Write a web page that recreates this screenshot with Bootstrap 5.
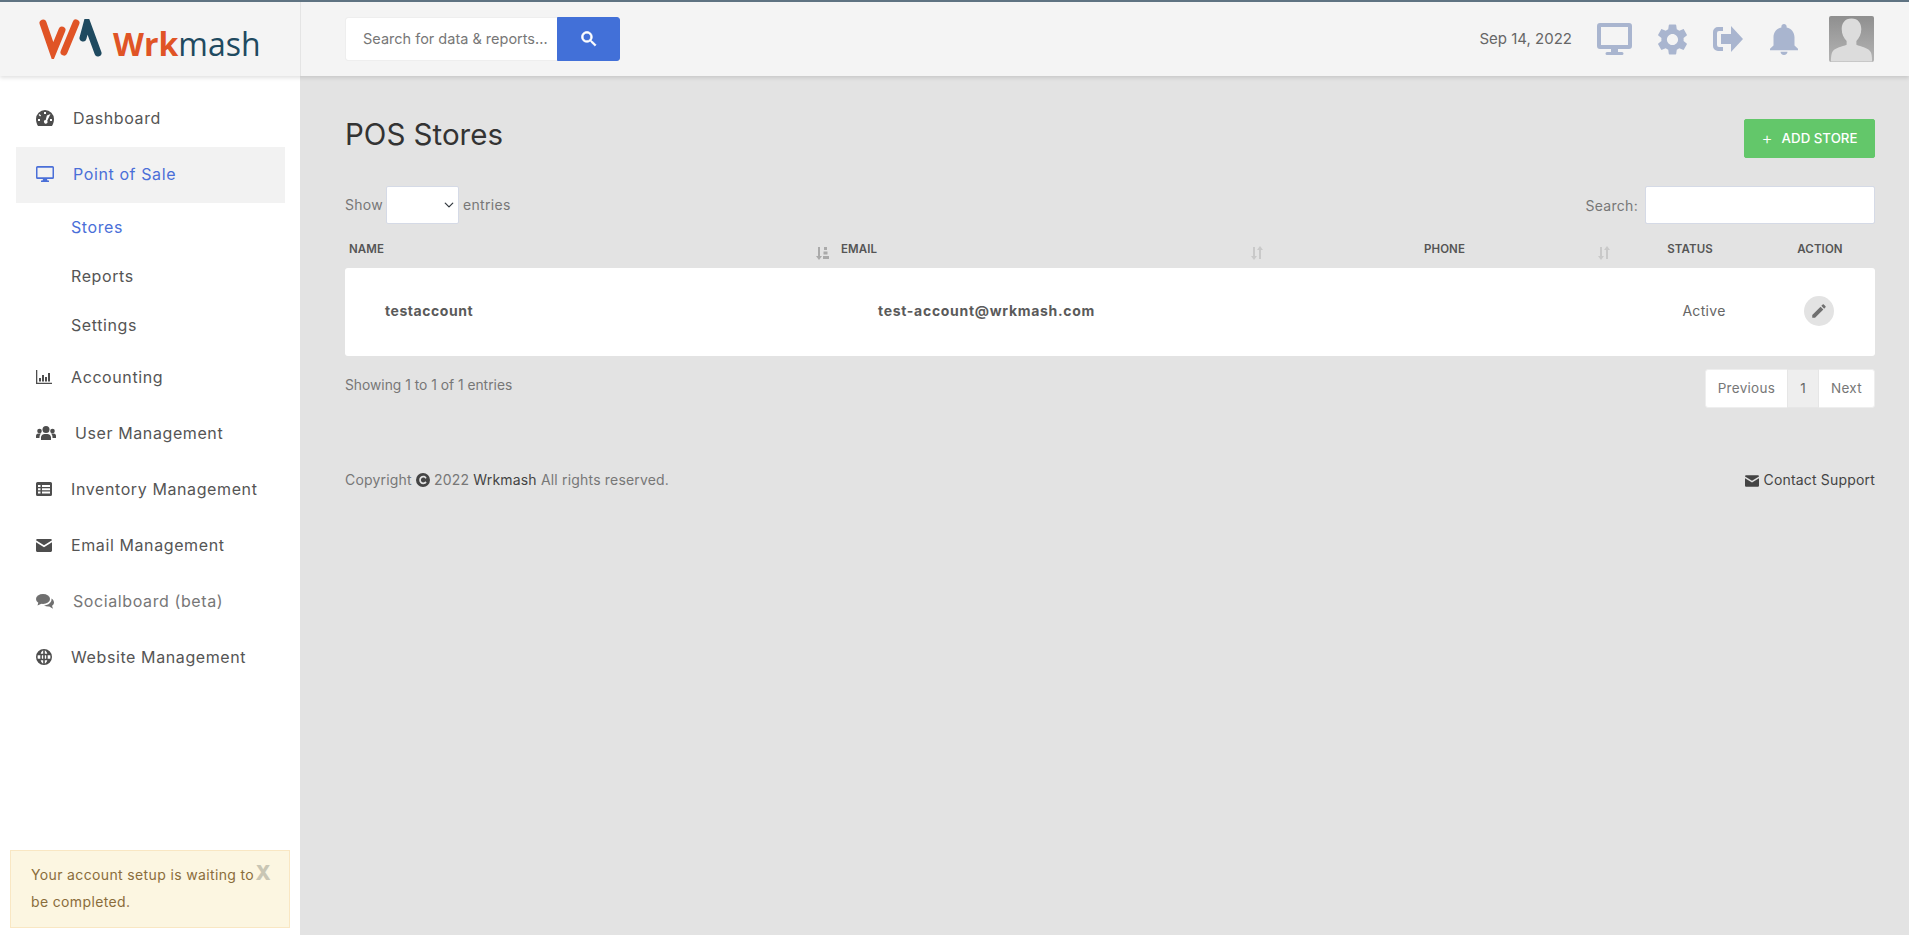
<!DOCTYPE html>
<html lang="en">
<head>
    <meta charset="UTF-8">
    <meta name="viewport" content="width=device-width, initial-scale=1">
    <title>POS Stores</title>
    <link href="https://cdn.jsdelivr.net/npm/bootstrap@5.3.0/dist/css/bootstrap.min.css" rel="stylesheet">
    <style>
        html, body { height: 100%; }
        body { font-family: Inter, "Liberation Sans", sans-serif; background: #e3e3e3; color: #666; overflow: hidden; letter-spacing: .3px; }
        .app-top { height: 76px; background: #f4f4f4; border-top: 2px solid #5f7382; box-shadow: 0 2px 4px rgba(0,0,0,.12); position: relative; z-index: 2; }
        .logo-box { width: 301px; border-right: 1px solid #e4e4e4; padding-left: 39px; }
        .logo-text { font-family: "Open Sans", sans-serif; font-size: 32px; letter-spacing: 0; margin-left: 8px; margin-top: 10px; line-height: 1; color: #1f4a60; }
        .logo-text b { color: #e05426; font-weight: 700; }
        .top-search { width: 275px; margin-left: 44px; height: 44px; }
        .top-search .form-control { border: 1px solid #eee; border-radius: 3px 0 0 3px; font-size: 14.5px; padding-left: 17px; padding-right: 4px; color: #777; }
        .top-search .form-control::placeholder { color: #777; }
        .top-search .btn { width: 63px; background: #4270d8; border-color: #4270d8; border-radius: 0 3px 3px 0; }
        .top-date { font-size: 15px; letter-spacing: 0; color: #666; margin-right: 25px; }
        .top-ico { color: #a9b5cf; fill: currentColor; }
        .gap-bell { margin-left: 27px; }
        .gap-out { margin-left: 25px; }
        .gap-gear { margin-left: 25px; }
        .avatar-box { width: 45px; height: 46px; border-radius: 2px; background: linear-gradient(#8f8f8f, #b4b4b4); overflow: hidden; margin-left: 31px; margin-right: 35px; }
        .side { width: 300px; background: #fff; height: 859px; padding: 15px 0 7px; }
        .side-link { height: 56px; margin: 0 15px 0 16px; padding-left: 20px; display: flex; align-items: center; gap: 19px; color: #555; text-decoration: none; font-size: 16px; letter-spacing: .6px; }
        .side-link svg { fill: #4d4d4d; flex: none; }
        .side-link.first-two { padding-bottom: 2px; }
        .side-link.on { background: #f2f2f2; color: #4a6fd8; }
        .side-link.on svg { fill: #4a6fd8; }
        .side-link.dim { color: #777; }
        .side-link.dim svg { fill: #6f6f6f; }
        .side-sub { height: 49px; display: flex; align-items: center; padding-left: 71px; color: #555; text-decoration: none; font-size: 16px; letter-spacing: .6px; }
        .side-sub.on { color: #4a6fd8; margin-top: -1px; }
        .setup-note { margin: auto 10px 0; background: #fcf6e1; border: 1px solid #f9e7c3; border-radius: 0; color: #8a6d3b; font-size: 14px; line-height: 27px; padding: 10px 20px 8px 20px; height: 78px; position: relative; letter-spacing: .36px; }
        .setup-x { position: absolute; right: 18px; top: 9px; color: #c9c6b4; font-weight: 800; font-size: 20px; line-height: 27px; }
        .main-pane { padding: 0 34px 0 45px; }
        .page-head { height: 110px; padding-top: 34px; }
        .page-head h1 { font-size: 29.5px; font-weight: 400; color: #333; margin: 0; letter-spacing: 0; padding-top: 7px; }
        .add-btn { background: #63c76a; border-color: #63c76a; color: #fff; font-size: 13.3px; font-weight: 500; width: 131px; height: 39px; border-radius: 2px; padding: 0; display: flex; align-items: center; justify-content: center; gap: 9px; letter-spacing: 0; margin-top: 9px; }
        .add-btn span { font-size: 17px; font-weight: 300; line-height: 1; }
        .tbl-tools { height: 38px; font-size: 14px; color: #777; }
        .tbl-tools .tool-label { padding-bottom: 2px; }
        .tbl-tools .form-select { width: 73px; height: 38px; margin: 0 4px 0 3px; border: 1px solid #d5dae6; border-radius: 2px; padding: 0 8px; background-position: right 4px center; background-size: 10px 10px; }
        .tbl-tools .form-control { width: 230px; height: 38px; border: 1px solid #d5dae6; border-radius: 2px; margin-left: 7px; }
        .store-table { table-layout: fixed; margin: 0; width: 100%; --bs-table-bg: transparent; }
        .store-table th { border: 0; height: 44px; padding: 7px 0 0; font-size: 11.5px; font-weight: 600; color: #555; vertical-align: middle; position: relative; letter-spacing: .1px; }
        .store-table td { border: 0; height: 88px; background: #fff; vertical-align: middle; padding: 0 0 3px; font-size: 14px; color: #666; }
        .store-table td:first-child { border-radius: 3px 0 0 3px; padding-left: 40px; font-weight: 700; letter-spacing: .55px; color: #5a5a5a; }
        .store-table td:last-child { border-radius: 0 3px 3px 0; }
        .mail-cell { margin-left: 41px; letter-spacing: .7px; color: #5a5a5a; }
        .sort-mark { position: absolute; top: 22px; fill: #c9c9c9; }
        .tbl-foot { margin-top: 12px; font-size: 13.8px; color: #777; letter-spacing: 0; }
        .foot-count { padding-top: 7px; }
        .pagination { --bs-pagination-font-size: 13.5px; --bs-pagination-color: #777; --bs-pagination-border-color: #eee; --bs-pagination-padding-x: 12px; --bs-pagination-padding-y: 0; --bs-pagination-border-radius: 3px; margin: 1px 0 0; letter-spacing: .3px; }
        .page-link { line-height: 37px; }
        .page-item.active .page-link { background: #eee; border-color: #e6e6e6; color: #666; }
        .edit-dot { width: 30px; height: 30px; border-radius: 50%; background: #e3e3e3; display: inline-flex; align-items: center; justify-content: center; margin-right: 2px; }
        .edit-dot svg { fill: #6f6f6f; }
        .foot-line { margin-top: 61px; font-size: 14px; color: #777; letter-spacing: .18px; }
        .foot-line b { font-weight: 400; color: #444; }
        .foot-line svg { fill: #444; vertical-align: -2px; }
    </style>
</head>
<body>
    <div class="app-top d-flex align-items-center">
        <div class="logo-box h-100 d-flex align-items-center">
            <svg width="66" height="40" viewBox="0 0 66 40" fill="none" stroke-linecap="round" stroke-width="7">
                <path d="M4 4 L14 33 L23 11" stroke="#e05426"/>
                <path d="M25 33 L37 4" stroke="#e05426"/>
                <path d="M44 19 L48 4 L59 34" stroke="#1f4a60"/>
            </svg>
            <div class="logo-text"><b>Wrk</b>mash</div>
        </div>
        <form class="input-group top-search">
            <input type="text" class="form-control" placeholder="Search for data &amp; reports...">
            <button type="button" class="btn d-flex align-items-center justify-content-center">
                <svg width="20" height="20" viewBox="0 0 24 24" fill="#fff"><path d="M15.5 14h-.79l-.28-.27C15.41 12.59 16 11.11 16 9.5 16 5.91 13.09 3 9.5 3S3 5.91 3 9.5 5.91 16 9.5 16c1.61 0 3.09-.59 4.23-1.57l.27.28v.79l5 4.99L20.49 19l-4.99-5zm-6 0C7.01 14 5 11.99 5 9.5S7.01 5 9.5 5 14 7.01 14 9.5 11.99 14 9.5 14z" stroke="#fff" stroke-width=".8"/></svg>
            </button>
        </form>
        <div class="ms-auto d-flex align-items-center">
            <span class="top-date">Sep 14, 2022</span>
            <svg class="top-ico" width="35" height="32" viewBox="0 0 35 32"><path fill-rule="evenodd" d="M3 0h29a3 3 0 0 1 3 3v20a3 3 0 0 1-3 3H21v3h4a1.5 1.5 0 0 1 0 3H10a1.5 1.5 0 0 1 0-3h4v-3H3a3 3 0 0 1-3-3V3a3 3 0 0 1 3-3zm1 4v18h27V4z"/></svg>
            <svg class="top-ico gap-gear" width="31" height="31" viewBox="2 2 20 20"><path d="M19.14 12.94c.04-.3.06-.61.06-.94 0-.32-.02-.64-.07-.94l2.03-1.58c.18-.14.23-.41.12-.61l-1.92-3.32c-.12-.22-.37-.29-.59-.22l-2.39.96c-.5-.38-1.03-.7-1.62-.94l-.36-2.54c-.04-.24-.24-.41-.48-.41h-3.84c-.24 0-.43.17-.47.41l-.36 2.54c-.59.24-1.13.57-1.62.94l-2.39-.96c-.22-.08-.47 0-.59.22L2.74 8.87c-.12.21-.08.47.12.61l2.03 1.58c-.05.3-.09.63-.09.94s.02.64.07.94l-2.03 1.58c-.18.14-.23.41-.12.61l1.92 3.32c.12.22.37.29.59.22l2.39-.96c.5.38 1.03.7 1.62.94l.36 2.54c.05.24.24.41.48.41h3.84c.24 0 .44-.17.47-.41l.36-2.54c.59-.24 1.13-.56 1.62-.94l2.39.96c.22.08.47 0 .59-.22l1.92-3.32c.12-.22.07-.47-.12-.61l-2.01-1.58zM12 15.6c-1.98 0-3.6-1.62-3.6-3.6s1.62-3.6 3.6-3.6 3.6 1.62 3.6 3.6-1.62 3.6-3.6 3.6z"/></svg>
            <svg class="top-ico gap-out" width="30" height="26" viewBox="0 0 30 26"><path d="M10 1v4H6a2 2 0 0 0-2 2v12a2 2 0 0 0 2 2h4v4H5a5 5 0 0 1-5-5V6a5 5 0 0 1 5-5z"/><path d="M18 0l12 13-12 13v-8H8V8h10z"/></svg>
            <svg class="top-ico gap-bell" width="28" height="31" viewBox="4 2.5 16 19.500" preserveAspectRatio="none"><path d="M12 22c1.1 0 2-.9 2-2h-4c0 1.1.89 2 2 2zm6-6v-5c0-3.07-1.64-5.64-4.5-6.32V4c0-.83-.67-1.5-1.5-1.5s-1.5.67-1.5 1.5v.68C7.63 5.36 6 7.92 6 11v5l-2 2v1h16v-1l-2-2z"/></svg>
            <div class="avatar-box">
                <svg width="45" height="46" viewBox="0 0 46 46" fill="#dcdcdc"><path d="M23 2c7 0 10 5 10 11 0 5-2 9-5 12v4c4 2 13 3 15 8 1 3 1 6 1 9H2c0-3 0-6 1-9 2-5 11-6 15-8v-4c-3-3-5-7-5-12 0-6 3-11 10-11z"/></svg>
            </div>
        </div>
    </div>

    <div class="d-flex">
        <nav class="side d-flex flex-column flex-shrink-0">
            <a class="side-link first-two" href="#"><svg width="18" height="16" viewBox="0 0 18 16"><path fill-rule="evenodd" d="M9 0a9 9 0 0 1 9 9c0 2.6-.8 5-2 7H2C.8 14 0 11.6 0 9a9 9 0 0 1 9-9zM8 2v2h2V2zM3.5 4 2.6 5l1.5 1.4 1-1zm11 0-3.6 1.6L9.700 10a1.800 1.800 0 1 0 1.500.7zM2 9v2h2V9zm12 0v2h2V9z"/></svg>Dashboard</a>
            <a class="side-link first-two on" href="#"><svg width="18" height="16" viewBox="0 0 18 16"><path fill-rule="evenodd" d="M1.500 0h15A1.500 1.500 0 0 1 18 1.500v10a1.500 1.500 0 0 1-1.500 1.500H11l.5 1.500h1.500V16H5v-1.500h1.500L7 13H1.500A1.500 1.500 0 0 1 0 11.500v-10A1.500 1.500 0 0 1 1.500 0zm0 1.700v9.600h15V1.700z"/></svg>Point of Sale</a>
            <a class="side-sub on" href="#">Stores</a>
            <a class="side-sub" href="#">Reports</a>
            <a class="side-sub" href="#">Settings</a>
            <a class="side-link" href="#"><svg width="16" height="14" viewBox="0 0 16 14"><path d="M0 0h1.300v12.700H16V14H0z"/><path d="M3 8h2v3.500H3zM6 5h2v6.500H6zM9 7h2v4.500H9zM12 3h2v8.500h-2z"/></svg>Accounting</a>
            <a class="side-link" href="#"><svg width="20" height="14" viewBox="0 0 20 14"><circle cx="10" cy="3.500" r="3.500"/><circle cx="3.500" cy="5" r="2.300"/><circle cx="16.500" cy="5" r="2.300"/><path d="M5 14v-3a4 4 0 0 1 4-3h2a4 4 0 0 1 4 3v3zM0 12v-2a2.500 2.500 0 0 1 2.500-2.500H5a5 5 0 0 0-1.500 3.500V12zM20 12v-2a2.500 2.500 0 0 0-2.500-2.500H15a5 5 0 0 1 1.500 3.500V12z"/></svg>User Management</a>
            <a class="side-link" href="#"><svg width="16" height="14" viewBox="0 0 16 14"><path fill-rule="evenodd" d="M1.500 0h13A1.500 1.500 0 0 1 16 1.500v11a1.500 1.500 0 0 1-1.500 1.500h-13A1.500 1.500 0 0 1 0 12.500v-11A1.500 1.500 0 0 1 1.500 0zM2 3v2h2.500V3zm4 0v2h8V3zM2 6.200v2h2.500v-2zm4 0v2h8v-2zM2 9.400v2h2.500v-2zm4 0v2h8v-2z"/></svg>Inventory Management</a>
            <a class="side-link" href="#"><svg width="16" height="13" viewBox="0 0 16 13"><path d="M1.500 0h13c.8 0 1.500.6 1.500 1.300L8 6.300 0 1.300C0 .6.700 0 1.500 0zM0 3.300l8 5 8-5v8.200c0 .8-.7 1.500-1.500 1.500h-13C.7 13 0 12.300 0 11.500z"/></svg>Email Management</a>
            <a class="side-link dim" href="#"><svg width="18" height="15" viewBox="0 0 18 15"><ellipse cx="7" cy="5" rx="7" ry="5"/><path d="M2.500 8 1.500 11.500 6 9.500z"/><path d="M15.500 4.500C17 5.500 18 7 18 8.500c0 1.500-1 2.700-2 3.300l1 2.900-3.800-2.200c-2 .2-3.800-.2-5.200-1.200 4.500 0 8-3 7.500-6.800z"/></svg>Socialboard (beta)</a>
            <a class="side-link" href="#"><svg width="16" height="16" viewBox="0 0 16 16"><path fill-rule="evenodd" d="M8 0a8 8 0 1 1 0 16A8 8 0 0 1 8 0zM7.200 1.300C5.900 2 5 3.500 4.700 4.800h2.500zm1.600 0v3.500h2.500C11 3.500 10.100 2 8.800 1.300zM1.800 6.200a6.500 6.500 0 0 0 0 3.600h2.600a13 13 0 0 1 0-3.600zm4.100 0a12 12 0 0 0 0 3.600h1.300V6.200zm2.900 0v3.600h1.300a12 12 0 0 0 0-3.600zm2.800 0a13 13 0 0 1 0 3.600h2.600a6.500 6.500 0 0 0 0-3.600zM4.700 11.200c.3 1.300 1.200 2.800 2.500 3.500v-3.500zm4.100 0v3.500c1.300-.7 2.200-2.200 2.500-3.500z"/></svg>Website Management</a>
            <div class="setup-note">Your account setup is waiting to be completed.<span class="setup-x">X</span></div>
        </nav>

        <main class="main-pane flex-grow-1">
            <div class="page-head d-flex justify-content-between align-items-start">
                <h1>POS Stores</h1>
                <button type="button" class="btn add-btn"><span>+</span> ADD STORE</button>
            </div>
            <div class="tbl-tools d-flex justify-content-between align-items-center">
                <div class="d-flex align-items-center"><span class="tool-label">Show</span> <select class="form-select"></select> <span class="tool-label">entries</span></div>
                <div class="d-flex align-items-center">Search: <input type="text" class="form-control"></div>
            </div>
            <table class="table store-table">
                <colgroup><col style="width:492px"><col style="width:433px"><col style="width:345px"><col style="width:150px"><col style="width:110px"></colgroup>
                <thead>
                    <tr>
                        <th class="ps-1">NAME
                            <svg class="sort-mark" style="right:7px" width="14" height="14" viewBox="0 0 14 14"><path fill="#aaa" d="M2 1h2v9h2l-3 4-3-4h2zM8 1h3v3H8zM7.500 5.500h4v3h-4zM7 10h6v3H7z"/></svg>
                        </th>
                        <th class="ps-1">EMAIL
                            <svg class="sort-mark" style="right:6px" width="14" height="14" viewBox="0 0 14 14"><path d="M3 1h2v9h2l-3 4-3-4h2zM9 13h2V4h2L10 0 7 4h2z"/></svg>
                        </th>
                        <th class="text-center ps-1">PHONE
                            <svg class="sort-mark" style="right:4px" width="14" height="14" viewBox="0 0 14 14"><path d="M3 1h2v9h2l-3 4-3-4h2zM9 13h2V4h2L10 0 7 4h2z"/></svg>
                        </th>
                        <th class="text-center">STATUS</th>
                        <th class="text-center">ACTION</th>
                    </tr>
                </thead>
                <tbody>
                    <tr>
                        <td>testaccount</td>
                        <td class="fw-bold"><span class="mail-cell">test-account@wrkmash.com</span></td>
                        <td></td>
                        <td class="text-center"><span class="ms-4 ps-1">Active</span></td>
                        <td class="text-center"><a class="edit-dot" href="#"><svg width="18" height="18" viewBox="0 0 24 24"><path d="M3 17.250V21h3.750L17.810 9.940l-3.750-3.750L3 17.250zM20.710 7.040c.39-.39.39-1.020 0-1.410l-2.340-2.340c-.39-.39-1.020-.39-1.410 0l-1.830 1.830 3.750 3.750 1.830-1.830z"/></svg></a></td>
                    </tr>
                </tbody>
            </table>
            <div class="tbl-foot d-flex justify-content-between align-items-start">
                <div class="foot-count">Showing 1 to 1 of 1 entries</div>
                <ul class="pagination">
                    <li class="page-item"><a class="page-link" href="#">Previous</a></li>
                    <li class="page-item active"><a class="page-link" href="#">1</a></li>
                    <li class="page-item"><a class="page-link" href="#">Next</a></li>
                </ul>
            </div>
            <div class="foot-line d-flex justify-content-between">
                <div>Copyright <svg width="14" height="14" viewBox="0 0 14 14"><path fill-rule="evenodd" d="M7 0a7 7 0 1 1 0 14A7 7 0 0 1 7 0zm2.300 8.300C9 9 8.200 9.500 7.300 9.500c-1.400 0-2.400-1.100-2.400-2.500s1-2.500 2.400-2.500c.9 0 1.700.5 2 1.200l1.300-.8C10 3.300 8.800 2.700 7.300 2.700 4.900 2.700 3.200 4.600 3.200 7s1.700 4.300 4.100 4.300c1.500 0 2.700-.7 3.300-1.700z"/></svg> 2022 <b>Wrkmash</b> All rights reserved.</div>
                <div><svg width="14" height="12" viewBox="0 0 16 13"><path d="M1.500 0h13c.8 0 1.500.6 1.500 1.300L8 6.300 0 1.300C0 .6.700 0 1.500 0zM0 3.300l8 5 8-5v8.200c0 .8-.7 1.500-1.500 1.500h-13C.7 13 0 12.300 0 11.500z"/></svg> <b>Contact Support</b></div>
            </div>
        </main>
    </div>

    <script src="https://cdn.jsdelivr.net/npm/bootstrap@5.3.0/dist/js/bootstrap.bundle.min.js"></script>
</body>
</html>
